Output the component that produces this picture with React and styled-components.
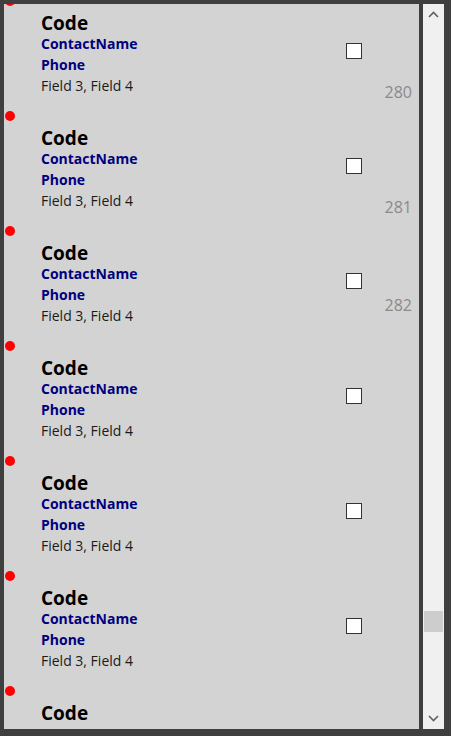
import styled, { createGlobalStyle } from "styled-components";

const GlobalStyle = createGlobalStyle`
  html, body {
    margin: 0;
    padding: 0;
    background: #3f3f3f;
  }
  * {
    box-sizing: border-box;
  }
`

const items = [
  { id: 0, index: 280, indexTop: 85 },
  { id: 1, index: 281, indexTop: 85 },
  { id: 2, index: 282, indexTop: 68 },
  { id: 3 },
  { id: 4 },
  { id: 5 },
  { id: 6 },
]

export default function App() {
  return (
    <Frame>
      <GlobalStyle />
      <ListPanel>
        <List>
          {items.map(item =>
            <Row key={item.id}>
              <Dot />
              <Content>
                <Code>Code</Code>
                <Contact>ContactName</Contact>
                <Contact>Phone</Contact>
                <Fields>Field 3, Field 4</Fields>
              </Content>
              <Check type="checkbox" />
              {item.index && <Index $top={item.indexTop}>{item.index}</Index>}
            </Row>
          )}
        </List>
      </ListPanel>
      <ScrollBar>
        <Arrow>
          <svg width="11" height="7" viewBox="0 0 11 7">
            <path d="M1 6 L5.5 1.5 L10 6" fill="none" stroke="#606060" strokeWidth="1.6" />
          </svg>
        </Arrow>
        <Track>
          <Thumb $offset={586} />
        </Track>
        <Arrow>
          <svg width="11" height="7" viewBox="0 0 11 7">
            <path d="M1 1 L5.5 5.5 L10 1" fill="none" stroke="#606060" strokeWidth="1.6" />
          </svg>
        </Arrow>
      </ScrollBar>
    </Frame>
  )
}

const Frame = styled.div`
  display: flex;
  gap: 4px;
  height: 736px;
  width: 451px;
  padding: 4px 7px 7px 4px;
  font-family: "Open Sans", "Noto Sans", sans-serif;
`
const ListPanel = styled.section`
  width: 415px;
  height: 725px;
  background-color: #d3d3d3;
  overflow: hidden;
`
const List = styled.ul`
  list-style: none;
  margin: -7px 0 0 0;
  padding: 0;
`
const Row = styled.li`
  position: relative;
  display: flex;
  align-items: flex-start;
  height: 115px;
`
const Dot = styled.span`
  width: 10px;
  height: 10px;
  margin: -1px 0 0 1px;
  border-radius: 50%;
  background-color: #ff0000;
`
const Content = styled.div`
  flex: 1;
  display: flex;
  flex-direction: column;
  padding: 16px 0 0 26px;
  line-height: 21px;
`
const Code = styled.strong`
  font-size: 19px;
  line-height: 20px;
  font-weight: 700;
  color: #000;
`
const Contact = styled.strong`
  font-size: 14px;
  font-weight: 700;
  color: #000080;
`
const Fields = styled.span`
  font-size: 14px;
  color: #1a1a1a;
`
const Check = styled.input`
  appearance: none;
  width: 16px;
  height: 16px;
  margin: 46px 57px 0 0;
  background: #fff;
  border: 1px solid #333;
  border-radius: 0;
`
const Index = styled.span`
  position: absolute;
  right: 7px;
  top: ${props => props.$top}px;
  font-size: 16px;
  line-height: 21px;
  color: #8a8a8a;
`
const ScrollBar = styled.aside`
  width: 21px;
  height: 725px;
  display: flex;
  flex-direction: column;
  background-color: #f0f0f0;
`
const Arrow = styled.div`
  height: 21px;
  display: flex;
  align-items: center;
  justify-content: center;
`
const Track = styled.div`
  flex: 1;
  padding: 0 1px;
`
const Thumb = styled.div`
  height: 21px;
  margin-top: ${props => props.$offset}px;
  background-color: #cdcdcd;
`
